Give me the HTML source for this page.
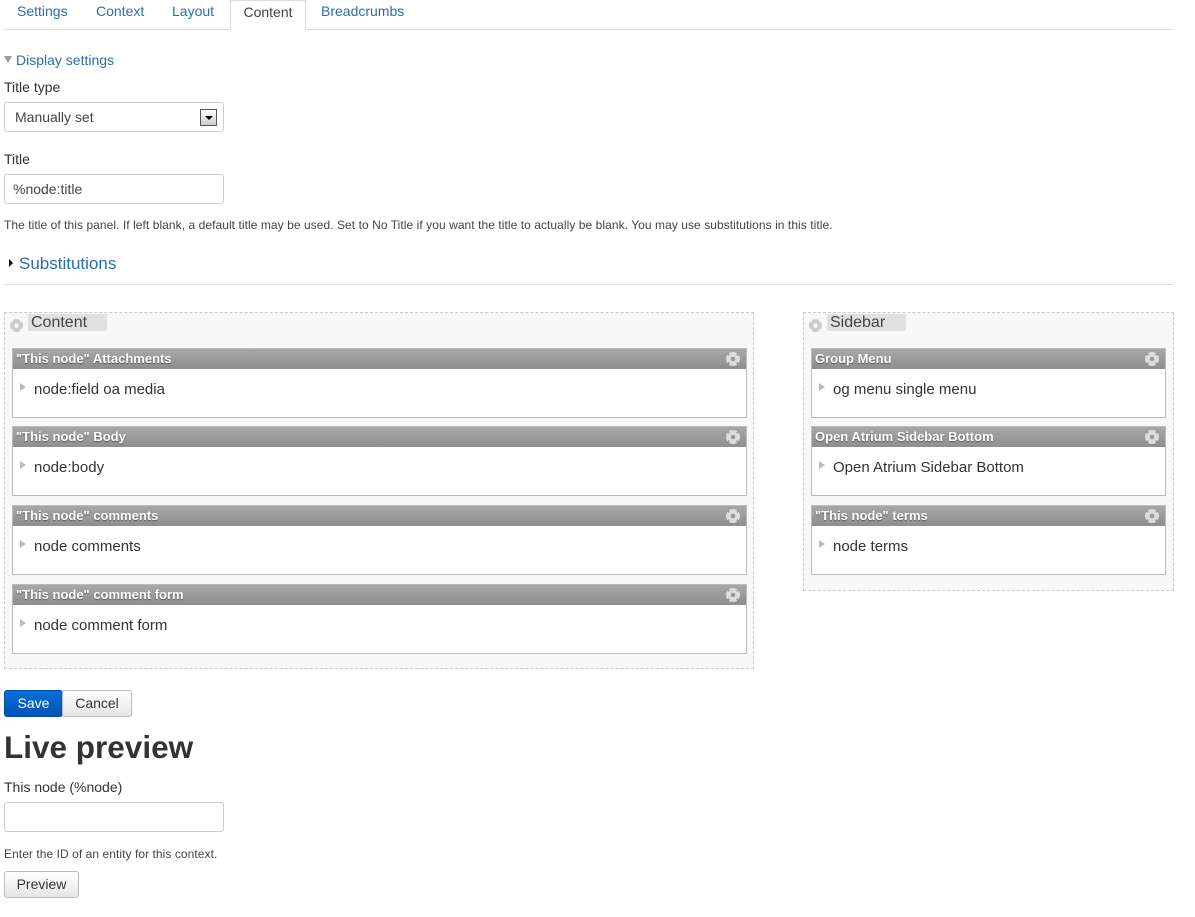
<!DOCTYPE html>
<html><head><style>
*{box-sizing:border-box}
body{margin:0;width:1195px;height:917px;background:#fff;font-family:"Liberation Sans",Arial,sans-serif;color:#333;position:relative;overflow:hidden}
.a{position:absolute}
.tab{position:absolute;top:0;height:30px;line-height:23px;font-size:14px;color:#2a6fa8}
.region{position:absolute;border:1px dashed #ccc;background:#f8f8f8}
.rlabel{position:absolute;top:1px;left:23px;height:17px;background:#e0e0e0;font-size:16px;color:#444;line-height:17px;padding-left:3px;border-radius:2px}
.gear{position:absolute;width:13px;height:13px;border-radius:50%;background:radial-gradient(circle,#f8f8f8 0 2px,#ccc 2.5px 5px,transparent 5.5px),conic-gradient(#ccc 0 10%,transparent 10% 15%,#ccc 15% 35%,transparent 35% 40%,#ccc 40% 60%,transparent 60% 65%,#ccc 65% 85%,transparent 85% 90%,#ccc 90%)}
.pane{position:absolute;border:1px solid #bbb;background:#fff;height:70px}
.ph{height:20px;background:linear-gradient(#a8a8a8,#8e8e8e);color:#fff;font-weight:bold;font-size:13px;line-height:20px;padding-left:3px;text-shadow:0 1px 1px #555;position:relative}
.ph:after{content:"";position:absolute;right:6px;top:3px;width:14px;height:14px;border-radius:50%;background:radial-gradient(circle,#999 0 2px,#ddd 2.5px 5px,transparent 5.5px),conic-gradient(#ddd 0 10%,transparent 10% 15%,#ddd 15% 35%,transparent 35% 40%,#ddd 40% 60%,transparent 60% 65%,#ddd 65% 85%,transparent 85% 90%,#ddd 90%)}
.pb{font-size:15px;padding:12px 0 0 21px;position:relative;color:#333}
.pb:before{content:"";position:absolute;left:7px;top:14px;border-left:6px solid #bbb;border-top:4px solid transparent;border-bottom:4px solid transparent}
.inp{position:absolute;border:1px solid #ccc;border-radius:3px;background:#fff}
.btn{position:absolute;border:1px solid #bbb;border-radius:3px;background:linear-gradient(#fff,#e6e6e6);font-size:14px;text-align:center;color:#333}
</style></head><body>
<div class="a" style="left:4px;top:29px;width:1169px;border-top:1px solid #ddd"></div>
<div class="tab" style="left:17px">Settings</div>
<div class="tab" style="left:96px">Context</div>
<div class="tab" style="left:172px">Layout</div>
<div class="tab" style="left:230px;width:76px;border:1px solid #ddd;border-bottom:1px solid #fff;background:#fff;color:#444;text-align:center">Content</div>
<div class="tab" style="left:321px">Breadcrumbs</div>

<div class="a" style="left:4px;top:56px;border-top:7px solid #999;border-left:4px solid transparent;border-right:4px solid transparent"></div>
<div class="a" style="left:16px;top:52px;font-size:14px;color:#2a6fa8">Display settings</div>
<div class="a" style="left:4px;top:79px;font-size:14px">Title type</div>
<div class="inp" style="left:4px;top:102px;width:220px;height:30px;font-size:14px;line-height:28px;padding-left:10px;color:#444">Manually set
<div class="a" style="left:195px;top:6px;width:17px;height:17px;border:1px solid #555;background:linear-gradient(#fff,#ccc)"><div class="a" style="left:4px;top:6px;border-top:4px solid #000;border-left:4px solid transparent;border-right:4px solid transparent"></div></div></div>
<div class="a" style="left:4px;top:151px;font-size:14px">Title</div>
<div class="inp" style="left:4px;top:174px;width:220px;height:30px;font-size:14px;line-height:28px;padding-left:8px;color:#444">%node:title</div>
<div class="a" style="left:4px;top:218px;font-size:12px;letter-spacing:0.06px;color:#444">The title of this panel. If left blank, a default title may be used. Set to No Title if you want the title to actually be blank. You may use substitutions in this title.</div>
<div class="a" style="left:9px;top:259px;border-left:4px solid #000;border-top:4px solid transparent;border-bottom:4px solid transparent"></div>
<div class="a" style="left:19px;top:254px;font-size:17px;color:#2a6fa8">Substitutions</div>
<div class="a" style="left:4px;top:284px;width:1169px;border-top:1px solid #ddd"></div>

<div class="region" style="left:4px;top:312px;width:750px;height:357px">
<div class="gear" style="left:5px;top:6px"></div><div class="rlabel" style="width:79px">Content</div>
<div class="pane" style="left:7px;top:35px;width:735px"><div class="ph">"This node" Attachments</div><div class="pb">node:field oa media</div></div>
<div class="pane" style="left:7px;top:113px;width:735px"><div class="ph">"This node" Body</div><div class="pb">node:body</div></div>
<div class="pane" style="left:7px;top:192px;width:735px"><div class="ph">"This node" comments</div><div class="pb">node comments</div></div>
<div class="pane" style="left:7px;top:271px;width:735px"><div class="ph">"This node" comment form</div><div class="pb">node comment form</div></div>
</div>
<div class="region" style="left:803px;top:312px;width:371px;height:279px">
<div class="gear" style="left:5px;top:6px"></div><div class="rlabel" style="width:79px">Sidebar</div>
<div class="pane" style="left:7px;top:35px;width:355px"><div class="ph">Group Menu</div><div class="pb">og menu single menu</div></div>
<div class="pane" style="left:7px;top:113px;width:355px"><div class="ph">Open Atrium Sidebar Bottom</div><div class="pb">Open Atrium Sidebar Bottom</div></div>
<div class="pane" style="left:7px;top:192px;width:355px"><div class="ph">"This node" terms</div><div class="pb">node terms</div></div>
</div>

<div class="btn" style="left:4px;top:690px;width:59px;height:27px;line-height:25px;background:linear-gradient(#0a6fd8,#0052b8);border-color:#0050a8;color:#fff">Save</div>
<div class="btn" style="left:62px;top:690px;width:70px;height:27px;line-height:25px">Cancel</div>
<div class="a" style="left:4px;top:729px;font-size:31.5px;font-weight:bold;color:#333">Live preview</div>
<div class="a" style="left:4px;top:779px;font-size:14px">This node (%node)</div>
<div class="inp" style="left:4px;top:802px;width:220px;height:30px"></div>
<div class="a" style="left:4px;top:847px;font-size:12px;letter-spacing:0.06px;color:#444">Enter the ID of an entity for this context.</div>
<div class="btn" style="left:4px;top:871px;width:75px;height:27px;line-height:25px">Preview</div>
</body></html>
